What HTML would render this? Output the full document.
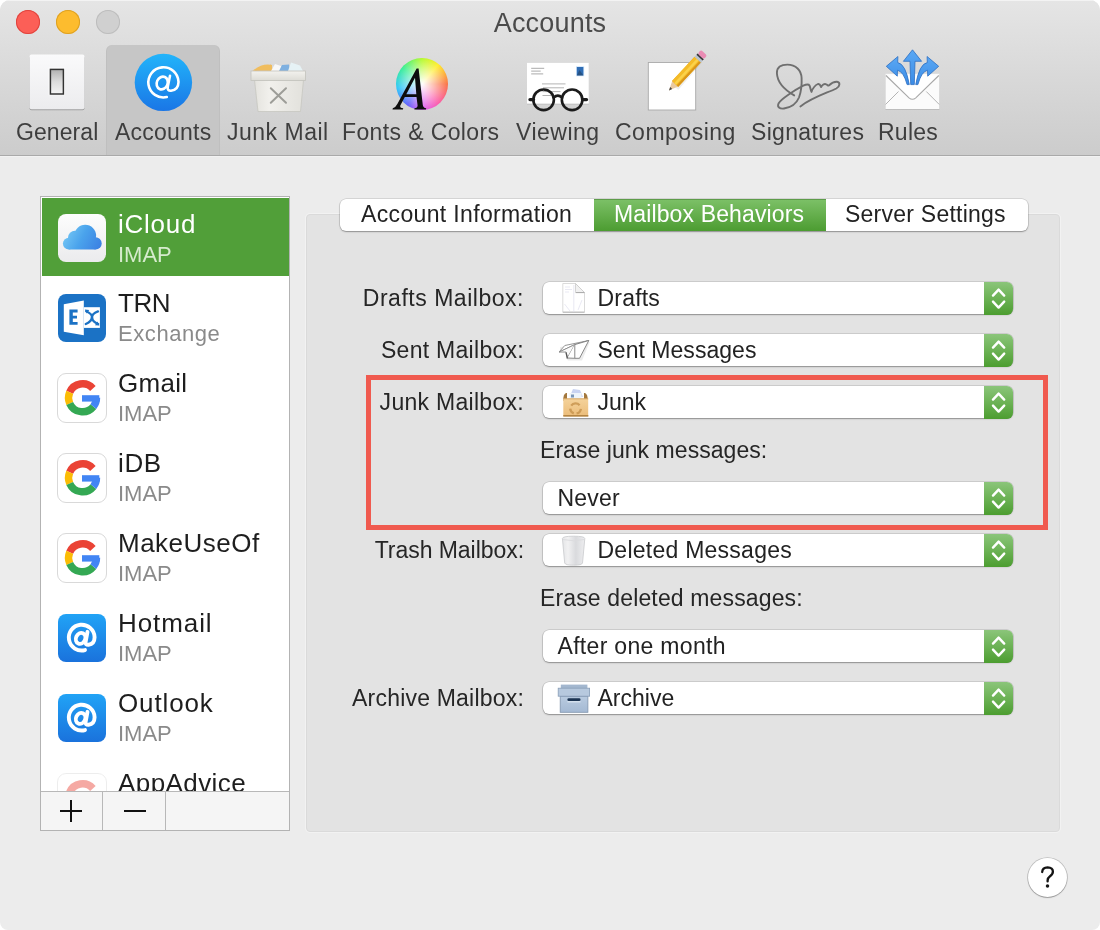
<!DOCTYPE html>
<html><head><meta charset="utf-8">
<style>
*{box-sizing:border-box;margin:0;padding:0}
html,body{width:1100px;height:930px;overflow:hidden;background:#fff;font-family:"Liberation Sans",sans-serif}
svg{overflow:visible}
#win{position:absolute;left:0;top:0;width:1100px;height:930px;background:#ececec;border-radius:10px 10px 8px 8px;overflow:hidden;will-change:transform}
.abs{position:absolute}
#tb{position:absolute;left:0;top:0;width:1100px;height:156px;background:linear-gradient(#e5e5e5,#cccccc);border-bottom:1px solid #a9a9a9;box-shadow:inset 0 1px 0 rgba(255,255,255,.55)}
.light{position:absolute;top:9.8px;width:24.2px;height:24.2px;border-radius:50%}
#title{position:absolute;left:0;width:1100px;top:10px;text-align:center;font-size:27px;line-height:27px;color:#4b4b4b;letter-spacing:.18px}
.tl{position:absolute;top:121px;font-size:23px;line-height:23px;color:#3e3e3e;white-space:nowrap}
#sel{position:absolute;left:106px;top:44.5px;width:114px;height:110.5px;background:#c6c6c6;border-radius:6px 6px 0 0;box-shadow:inset 1px 0 0 rgba(0,0,0,.03),inset -1px 0 0 rgba(0,0,0,.03)}
#side{position:absolute;left:40px;top:196px;width:250px;height:635px;background:#fff;border:1px solid #b3b3b3;overflow:hidden}
.row{position:absolute;left:0;width:248px;height:80px}
.rt{position:absolute;left:77px;top:12.6px;font-size:26px;line-height:26px;color:#1e1e1e;white-space:nowrap}
.rs{position:absolute;left:77px;top:45.8px;font-size:22px;line-height:22px;color:#8a8a8a;white-space:nowrap}
.ic{position:absolute;left:17px;top:17px;width:48px;height:48px}
.gi{left:16px;top:16px;width:50px;height:50px}
#bbar{position:absolute;left:0;top:594px;width:248px;height:39px;background:#f5f5f5;border-top:1px solid #b8b8b8}
#group{position:absolute;left:306px;top:214px;width:754px;height:618px;background:#e3e3e3;border:1px solid #dadada;border-radius:4px;box-shadow:0 0 0 1px rgba(255,255,255,.35)}
#seg{position:absolute;left:340px;top:198.5px;width:688px;height:32px;background:#fff;border-radius:6px;box-shadow:0 0 0 0.5px rgba(0,0,0,.18),0 1px 1.5px rgba(0,0,0,.3);overflow:hidden}
.seg{position:absolute;top:4px;font-size:23px;line-height:23px;color:#222;white-space:nowrap}
.lab{position:absolute;font-size:23px;line-height:23px;color:#262626;white-space:nowrap;text-align:right}
.pop{position:absolute;left:542.5px;width:470.3px;height:32.5px;background:#fff;border-radius:6px;box-shadow:0 0 0 0.5px rgba(0,0,0,.2),0 1px 1.5px rgba(0,0,0,.3)}
.pop .pt{position:absolute;left:55px;top:5px;font-size:23px;line-height:23px;color:#222;white-space:nowrap}
.pop .st{position:absolute;right:0;top:0;width:29px;height:32.5px}
.pop .pi{position:absolute;left:18px;top:0;width:30px;height:33px}
#red{position:absolute;left:366px;top:375px;width:682px;height:155px;border:5px solid #f05a4f}
#help{position:absolute;left:1027.5px;top:857.5px;width:39px;height:39px;border-radius:50%;background:#fff;box-shadow:0 0 0 0.8px rgba(0,0,0,.2),0 1px 1.2px rgba(0,0,0,.22)}
</style></head><body>
<div id="win">
  <div id="tb"></div><div class="abs" style="left:0;top:156px;width:1100px;height:1px;background:#f2f2f2"></div>
  <div class="light" style="left:16px;background:#fc5f57;box-shadow:inset 0 0 0 1px #e0443e"></div>
  <div class="light" style="left:56px;background:#fdbc2e;box-shadow:inset 0 0 0 1px #dea123"></div>
  <div class="light" style="left:96px;background:#d0d0d0;box-shadow:inset 0 0 0 1px #bdbdbd"></div>
  <div id="title">Accounts</div>
  <div id="sel"></div>
  <div class="tl" style="left:16px;letter-spacing:.07px">General</div>
  <div class="tl" style="left:115px;letter-spacing:.23px">Accounts</div>
  <div class="tl" style="left:227px;letter-spacing:.5px">Junk Mail</div>
  <div class="tl" style="left:342px;letter-spacing:.38px">Fonts &amp; Colors</div>
  <div class="tl" style="left:516px;letter-spacing:.5px">Viewing</div>
  <div class="tl" style="left:615px;letter-spacing:.5px">Composing</div>
  <div class="tl" style="left:751px;letter-spacing:.33px">Signatures</div>
  <div class="tl" style="left:878px;letter-spacing:.25px">Rules</div>
  <svg width="0" height="0" style="position:absolute">
    <defs>
      <g id="gicon">
        <rect x="-0.5" y="-0.5" width="49" height="49" rx="8.5" fill="#fff" stroke="#d9d9d9" stroke-width="1"/>
        <g fill="none" stroke-width="7.4" transform="translate(24.5 23.8)">
          <path d="M10.4 -9.4 A14 14 0 0 0 -12.8 -5.6" stroke="#ea4335"/>
          <path d="M-12.8 -5.6 A14 14 0 0 0 -12.8 5.6" stroke="#fbbc05"/>
          <path d="M-12.8 5.6 A14 14 0 0 0 10.9 8.8" stroke="#34a853"/>
          <path d="M10.9 8.8 A14 14 0 0 0 14 0" stroke="#4285f4"/>
        </g>
        <rect x="24" y="21.2" width="17.3" height="6.4" fill="#4285f4"/>
      </g>
      <linearGradient id="gat" x1="0" y1="0" x2="0" y2="1"><stop offset="0" stop-color="#21a3f6"/><stop offset="1" stop-color="#1a72dc"/></linearGradient>
      <g id="aticon">
        <rect x="0" y="0" width="48" height="48" rx="8" fill="url(#gat)"/>
        <g transform="translate(23.7 23.6)" fill="none" stroke="#fff" stroke-width="3.9" stroke-linecap="round">
          <ellipse cx="-1.1" cy="0.8" rx="4.6" ry="5.6" transform="rotate(24 -1.1 0.8)"/>
          <path d="M5.8 -5.8 L3.9 4.2 Q3.4 7.4 6.8 7.2 Q12.8 6.4 12.9 -0.4 A12.9 12.9 0 1 0 3.3 12.5"/>
        </g>
      </g>
      <linearGradient id="gstep" x1="0" y1="0" x2="0" y2="1"><stop offset="0" stop-color="#8bc57a"/><stop offset="0.5" stop-color="#6cb255"/><stop offset="1" stop-color="#4c9d30"/></linearGradient>
      <g id="stepper">
        <path d="M0 0 H23 A6 6 0 0 1 29 6 V27 A6 6 0 0 1 23 33 H0 Z" fill="url(#gstep)"/>
        <path d="M9 13.6 L14.6 7.6 L20.2 13.6 M9 19.6 L14.6 25.6 L20.2 19.6" fill="none" stroke="#fff" stroke-width="2.4" stroke-linecap="round" stroke-linejoin="round"/>
      </g>
    </defs>
  </svg>
  <!-- General icon -->
  <svg class="abs" style="left:24px;top:50px" width="66" height="66" viewBox="24 50 66 66">
    <defs>
      <linearGradient id="gplate" x1="0" y1="0" x2="0" y2="1"><stop offset="0" stop-color="#fafafb"/><stop offset="1" stop-color="#ececee"/></linearGradient>
      <linearGradient id="gsw" x1="0" y1="0" x2="0" y2="1"><stop offset="0" stop-color="#b0b0b0"/><stop offset="0.5" stop-color="#dcdcdc"/><stop offset="1" stop-color="#f4f4f4"/></linearGradient>
    </defs>
    <rect x="29.5" y="55.8" width="55" height="54.5" rx="2" fill="#8a8a8a" opacity=".7"/>
    <rect x="29.5" y="54.5" width="55" height="54.8" rx="2" fill="url(#gplate)"/>
    <rect x="48.6" y="67.6" width="16.4" height="27.6" fill="#fff"/>
    <rect x="50.4" y="69.4" width="13" height="24.6" fill="url(#gsw)" stroke="#333" stroke-width="1.5"/>
  </svg>
  <!-- Accounts icon -->
  <svg class="abs" style="left:130px;top:50px" width="68" height="66" viewBox="130 50 68 66">
    <defs><linearGradient id="gacc" x1="0" y1="0" x2="0" y2="1"><stop offset="0" stop-color="#22b4fa"/><stop offset="1" stop-color="#1a76e6"/></linearGradient></defs>
    <circle cx="163.4" cy="82.4" r="28.7" fill="url(#gacc)"/>
    <g transform="translate(163.4 82.4)" fill="none" stroke="#fff" stroke-width="2.6" stroke-linecap="round">
      <ellipse cx="-1.2" cy="0.6" rx="5.4" ry="6.5" transform="rotate(24 -1.2 0.6)"/>
      <path d="M6.6 -6.6 L4.3 4.6 Q3.7 8.5 7.6 8.3 Q15 7.4 15.1 -0.5 A15.1 15.1 0 1 0 3.4 14.7"/>
    </g>
  </svg>
  <!-- Junk Mail icon -->
  <svg class="abs" style="left:246px;top:56px" width="64" height="60" viewBox="246 56 64 60">
    <defs>
      <linearGradient id="gbin" x1="0" y1="0" x2="1" y2="0"><stop offset="0" stop-color="#e4e3de"/><stop offset=".3" stop-color="#f1f0ec"/><stop offset="1" stop-color="#e2e1dc"/></linearGradient>
      <linearGradient id="grim" x1="0" y1="0" x2="0" y2="1"><stop offset="0" stop-color="#f3f2ee"/><stop offset="1" stop-color="#dddcd6"/></linearGradient>
    </defs>
    <path d="M252 71 L271 64.5 L273 70 Z" fill="#e8b55a"/>
    <path d="M253 70.5 Q262 63 272 65 L272 71 Z" fill="#f0bd5e"/>
    <path d="M271 71 L275 64 L281 66 L281 71 Z" fill="#f8f8f8"/>
    <path d="M279 71 L282 65 L289 64.5 L290 71 Z" fill="#7fb0e0"/>
    <path d="M288 71 L291 62.5 L300 65.5 L303 71 Z" fill="#e6f2f5"/>
    <path d="M254.5 80 L303.5 80 L300.5 111.5 L258 111.5 Z" fill="url(#gbin)" stroke="#c7c6c0" stroke-width="0.8"/>
    <rect x="251" y="71" width="54.5" height="9.5" fill="url(#grim)" stroke="#c3c2bc" stroke-width="0.8"/>
    <path d="M270.8 88.3 L286 102.8 M286 88.3 L270.8 102.8" stroke="#9d9d98" stroke-width="2" stroke-linecap="round"/>
  </svg>
  <!-- Fonts & Colors icon -->
  <div class="abs" style="left:396px;top:57.5px;width:52px;height:52px;border-radius:50%;background:radial-gradient(circle at 50% 50%,rgba(255,255,255,1) 0%,rgba(255,255,255,.55) 35%,rgba(255,255,255,0) 75%),conic-gradient(from 0deg,hsl(80,95%,55%),hsl(55,100%,55%) 40deg,hsl(15,95%,60%) 90deg,hsl(330,95%,65%) 140deg,hsl(290,90%,65%) 180deg,hsl(240,95%,66%) 215deg,hsl(195,95%,55%) 260deg,hsl(150,85%,55%) 310deg,hsl(80,95%,55%) 360deg)"></div>
  <svg class="abs" style="left:388px;top:64px" width="44" height="50" viewBox="388 64 44 50">
    <path d="M392.5 109.5 L403 109.5 L403.2 108.3 Q399.5 108 400.3 105.4 L404.8 97 L416.5 97 L417.6 105.5 Q417.6 108 414.5 108.3 L414.4 109.5 L426 109.5 L426.2 108.3 Q423.2 108 422.8 105 L418.6 68.5 L416.6 68.5 L397.5 103.8 Q395.6 107.6 392.8 108.3 Z M406.3 94.2 L415 77.8 L416.3 94.2 Z" fill="#0d0d0d"/>
  </svg>
  <!-- Viewing icon -->
  <svg class="abs" style="left:522px;top:56px" width="72" height="60" viewBox="522 56 72 60">
    <rect x="527" y="63.5" width="61.8" height="41" fill="#9c9c9c" opacity=".45"/>
    <rect x="527" y="62.9" width="61.8" height="40.8" fill="#fff"/>
    <rect x="576" y="66.1" width="8.2" height="10.2" fill="#d7e9fb"/>
    <rect x="576.8" y="67" width="6.6" height="8.4" fill="#2f6db5"/>
    <path d="M576.8 75.4 L579.5 70 L583.4 75.4 Z" fill="#22476f" opacity=".7"/>
    <path d="M531.2 68.3 h13 M531.2 71.1 h9.5 M531.2 73.9 h12" stroke="#8e8e8e" stroke-width="0.75"/>
    <path d="M542 83.9 h23.5 M543 87.8 h21 M542.5 91.6 h18 M542.5 95.5 h9" stroke="#9a9a9a" stroke-width="0.75"/>
    <g fill="none" stroke="#1b1b1b" stroke-width="2.6">
      <circle cx="543.6" cy="99.8" r="10.3"/>
      <circle cx="572.1" cy="99.8" r="10.3"/>
      <path d="M553.6 97.6 Q557.9 93.5 562.1 97.6"/>
    </g>
    <path d="M530 99.6 L533.5 99.6 M582.5 99.6 L586.5 99.6" stroke="#1b1b1b" stroke-width="3.4" stroke-linecap="round"/>
  </svg>
  <!-- Composing icon -->
  <svg class="abs" style="left:642px;top:46px" width="70" height="70" viewBox="642 46 70 70">
    <defs><linearGradient id="gpen" x1="0" y1="0" x2="1" y2="0"><stop offset="0" stop-color="#e29a12"/><stop offset=".5" stop-color="#f7c32c"/><stop offset="1" stop-color="#d08a10"/></linearGradient></defs>
    <rect x="648.3" y="62.5" width="47.4" height="47.5" fill="#fff" stroke="#a9a9a9" stroke-width="0.9"/>
    <path d="M676 88 L700 60" stroke="#000" stroke-opacity=".07" stroke-width="6"/>
    <g transform="translate(669 90.4) rotate(-47)">
      <path d="M0 0 L9 -4 L9 4 Z" fill="#e9c9a0"/>
      <path d="M0 0 L3.2 -1.4 L3.2 1.4 Z" fill="#444"/>
      <rect x="9" y="-4.2" width="33" height="8.4" fill="url(#gpen)" transform="rotate(90 25.5 0) rotate(-90 25.5 0)"/>
      <rect x="9" y="-4.2" width="33" height="8.4" fill="#f4bb28"/>
      <rect x="9" y="-1.2" width="33" height="2.4" fill="#fbd24a"/>
      <rect x="9" y="2.2" width="33" height="2" fill="#d9951a"/>
      <rect x="42" y="-4.2" width="4.5" height="8.4" fill="#b9c3cc"/>
      <rect x="44.8" y="-4.2" width="1.7" height="8.4" fill="#333"/>
      <rect x="46.5" y="-4.2" width="5" height="8.4" rx="2" fill="#e98cb4"/>
    </g>
  </svg>
  <!-- Signatures icon -->
  <svg class="abs" style="left:770px;top:56px" width="76" height="60" viewBox="770 56 76 60">
    <path d="M794.2 95.4 C790 93 777.5 85 776.9 73.3 C776.8 67 781 64.6 787.3 64.6 C796 64.6 801.3 70.5 801.6 78 C802 86 801 92 799 97.5 C796.5 103.5 791.5 107.5 784 108.5 C779.5 109 777 107 778.5 103.5 C781 99 795 90 803.2 85.7 C806 84.4 808.5 83.8 809.5 85.5 C810.5 87.5 810.7 91 811.5 91.9 C812.5 89 814.5 85.5 818 84 C820.5 83.5 820.5 86.5 821.1 87.1 C822.5 84.5 824.5 83.4 826.5 84.5 C828 85.5 828 86 828.8 85.5 C831 83.5 834 81.6 837 81.8 C840.5 82.2 840 86.5 836.3 88.5 C827 93 812 97.5 800.4 106.4" fill="none" stroke="#6f6f6f" stroke-width="1.9" stroke-linecap="round" stroke-linejoin="round"/>
  </svg>
  <!-- Rules icon -->
  <svg class="abs" style="left:878px;top:46px" width="70" height="70" viewBox="878 46 70 70">
    <defs><linearGradient id="garr" x1="0" y1="0" x2="0" y2="1"><stop offset="0" stop-color="#5aa8f4"/><stop offset="1" stop-color="#3b8ce6"/></linearGradient></defs>
    <rect x="885.5" y="74.5" width="53.8" height="35.5" fill="#9a9a9a" opacity=".5"/>
    <rect x="885.5" y="73.8" width="53.8" height="35.3" fill="#fbfbfb"/>
    <path d="M885.5 104.5 L898.5 91.5 M939.3 104.5 L926.3 91.5" stroke="#b4b4b4" stroke-width="1"/>
    <path d="M886 75.5 L909 97.8 Q912.4 100.8 915.8 97.8 L938.8 75.5" fill="#fff" stroke="#a8a8a8" stroke-width="1.1"/>
    <g fill="url(#garr)" stroke="#2d6fc2" stroke-width="0.8" stroke-linejoin="round">
      <path d="M912.5 49.8 L921.6 61.3 L915 61.3 L914.3 84.6 L910.7 84.6 L910 61.3 L903.4 61.3 Z"/>
      <path d="M886.3 66.3 L897.9 56.5 L897.7 62.6 Q905.6 63.8 909.3 84.6 L907.1 84.6 Q903.6 71.6 897.5 70.2 L897.3 76.2 Z"/>
      <path d="M938.7 66.3 L927.1 56.5 L927.3 62.6 Q919.4 63.8 915.7 84.6 L917.9 84.6 Q921.4 71.6 927.5 70.2 L927.7 76.2 Z"/>
    </g>
  </svg>
  <div id="side">
    <div class="row" style="top:1px;left:1px;width:247px;height:78px;background:#519f39">
      <svg class="ic" style="top:16px;left:16px" width="48" height="48" viewBox="0 0 48 48">
        <defs>
          <linearGradient id="gicw" x1="0" y1="0" x2="0" y2="1"><stop offset="0" stop-color="#fdfdfd"/><stop offset="1" stop-color="#ebebed"/></linearGradient>
          <linearGradient id="gcloud" gradientUnits="userSpaceOnUse" x1="5" y1="14" x2="43" y2="34"><stop offset="0" stop-color="#7ccdf6"/><stop offset=".5" stop-color="#4aa3ec"/><stop offset="1" stop-color="#3b7fe2"/></linearGradient>
        </defs>
        <rect x="0" y="0" width="48" height="48" rx="8" fill="url(#gicw)"/>
        <g fill="url(#gcloud)">
          <circle cx="10.8" cy="29.6" r="5.9"/>
          <circle cx="17" cy="23.8" r="7"/>
          <circle cx="27.2" cy="21.6" r="10.9"/>
          <circle cx="37.6" cy="29.4" r="6.1"/>
          <rect x="10.8" y="24" width="26.8" height="11.5"/>
        </g>
      </svg>
      <div class="rt" style="color:#fff;left:76px;letter-spacing:.76px">iCloud</div>
      <div class="rs" style="color:#d6ebcd;left:76px">IMAP</div>
    </div>
    <div class="row" style="top:80px">
      <svg class="ic" width="48" height="48" viewBox="0 0 48 48">
        <rect x="0" y="0" width="48" height="48" rx="8" fill="#1b72c5"/>
        <path d="M5.8 10.3 L25.8 6.5 L25.8 41.3 L5.8 37.7 Z" fill="#fff"/>
        <rect x="25.8" y="13.2" width="16.1" height="20.7" fill="#fff"/>
        <path d="M11.4 15.6 H19.6 V18.5 H14.8 V21.7 H19 V24.6 H14.8 V27.9 H19.6 V30.8 H11.4 Z" fill="#1b72c5"/>
        <g stroke="#1b72c5" stroke-width="2.3" fill="none" stroke-linecap="round">
          <path d="M28.2 17.2 Q34.5 20 34.2 23.6 Q34 27.5 40.2 30"/>
          <path d="M40 17.4 Q33.8 19.8 33.8 23.6 Q33.8 27.4 27.8 30"/>
        </g>
        <path d="M26.8 15.5 L31.2 16 L28.8 19.6 Z M41.4 31.6 L37 31.2 L39.4 27.6 Z" fill="#1b72c5"/>
      </svg>
      <div class="rt" style="letter-spacing:-0.5px">TRN</div>
      <div class="rs" style="letter-spacing:.57px">Exchange</div>
    </div>
    <div class="row" style="top:160px">
      <svg class="ic gi" width="50" height="50" viewBox="-1 -1 50 50"><use href="#gicon"/></svg>
      <div class="rt" style="letter-spacing:0.28px">Gmail</div>
      <div class="rs">IMAP</div>
    </div>
    <div class="row" style="top:240px">
      <svg class="ic gi" width="50" height="50" viewBox="-1 -1 50 50"><use href="#gicon"/></svg>
      <div class="rt" style="letter-spacing:0.6px">iDB</div>
      <div class="rs">IMAP</div>
    </div>
    <div class="row" style="top:320px">
      <svg class="ic gi" width="50" height="50" viewBox="-1 -1 50 50"><use href="#gicon"/></svg>
      <div class="rt" style="letter-spacing:0.5px">MakeUseOf</div>
      <div class="rs">IMAP</div>
    </div>
    <div class="row" style="top:400px">
      <svg class="ic" width="48" height="48" viewBox="0 0 48 48"><use href="#aticon"/></svg>
      <div class="rt" style="letter-spacing:0.92px">Hotmail</div>
      <div class="rs">IMAP</div>
    </div>
    <div class="row" style="top:480px">
      <svg class="ic" width="48" height="48" viewBox="0 0 48 48"><use href="#aticon"/></svg>
      <div class="rt" style="letter-spacing:0.87px">Outlook</div>
      <div class="rs">IMAP</div>
    </div>
    <div class="row" style="top:560px">
      <svg class="ic gi" width="50" height="50" viewBox="-1 -1 50 50" style="opacity:.45"><use href="#gicon"/></svg>
      <div class="rt" style="letter-spacing:0.42px">AppAdvice</div>
    </div>
    <div id="bbar">
      <div class="abs" style="left:61px;top:0;width:1px;height:38px;background:#b8b8b8"></div>
      <div class="abs" style="left:124px;top:0;width:1px;height:38px;background:#b8b8b8"></div>
      <div class="abs" style="left:19px;top:18px;width:22px;height:2px;background:#111"></div>
      <div class="abs" style="left:29px;top:8px;width:2px;height:22px;background:#111"></div>
      <div class="abs" style="left:83px;top:18px;width:22px;height:2px;background:#111"></div>
    </div>
  </div>
  <div id="group"></div>
  <div id="seg">
    <div class="abs" style="left:254px;top:0;width:232px;height:32px;background:linear-gradient(#7dc168,#4c9c31);box-shadow:inset 0 1px 0 rgba(40,90,20,.35)"></div>
    <div class="seg" style="left:21px;letter-spacing:.35px">Account Information</div>
    <div class="seg" style="left:274px;color:#fff;letter-spacing:.13px">Mailbox Behaviors</div>
    <div class="seg" style="left:505px;letter-spacing:.24px">Server Settings</div>
  </div>

  <div class="lab" style="right:576px;top:286.5px;letter-spacing:.52px">Drafts Mailbox:</div>
  <div class="lab" style="right:576px;top:338.5px;letter-spacing:.28px">Sent Mailbox:</div>
  <div class="lab" style="right:576px;top:390.5px;letter-spacing:.29px">Junk Mailbox:</div>
  <div class="lab" style="left:540px;top:438.5px;text-align:left;letter-spacing:.05px">Erase junk messages:</div>
  <div class="lab" style="right:576px;top:538.5px;letter-spacing:-.05px">Trash Mailbox:</div>
  <div class="lab" style="left:540px;top:586.5px;text-align:left;letter-spacing:.14px">Erase deleted messages:</div>
  <div class="lab" style="right:576px;top:686.5px;letter-spacing:.2px">Archive Mailbox:</div>

  <div class="pop" style="top:281.5px">
    <svg class="pi" width="30" height="33" viewBox="0 0 30 33">
      <path d="M1.8 1.5 H14.5 L23.5 10.5 V30.2 H1.8 Z" fill="#fff" stroke="#d2d2d2" stroke-width="0.8"/>
      <path d="M1.8 30.2 H23.5" stroke="#b5b5b5" stroke-width="1"/>
      <path d="M14.5 1.5 L23.5 10.5 H15.5 Q14.5 10.5 14.5 9.5 Z" fill="#f1f1f1" stroke="#c4c4c4" stroke-width="0.7"/>
      <path d="M14.6 10.6 H23.4" stroke="#a9a9a9" stroke-width="1"/>
      <path d="M4 5 h5 M4 7.5 h7 M4 10 h4 M12.8 3 V30 M3.5 22 L9 29 M21 18 L17 28" stroke="#e0e0ee" stroke-width="0.7"/>
    </svg>
    <div class="pt" style="letter-spacing:.2px">Drafts</div><svg class="st" width="29" height="33"><use href="#stepper"/></svg></div>
  <div class="pop" style="top:333.5px">
    <svg class="pi" width="30" height="33" viewBox="0 0 30 33">
      <path d="M-1.9 11.5 L27.8 6.5 L20 25 L6 25 L4 22.5 L4 17 L-2 17 Z" fill="#000" opacity=".08" transform="translate(1 1.5)"/>
      <path d="M-1.9 18 L3.8 11.5 L27.8 6.5 L13.8 10.6 Z" fill="#fff" stroke="#8a8a8a" stroke-width="0.9" stroke-linejoin="round"/>
      <path d="M-1.9 18 L5 18 L6.5 23.5 L13.8 10.6 Z" fill="#fafafa" stroke="#8a8a8a" stroke-width="0.9" stroke-linejoin="round"/>
      <path d="M13.8 10.6 L13.8 24.3 L6.5 24 M13.8 10.6 L27.8 6.5 L18.5 24.3 L13.8 24.3" fill="#fff" stroke="#7a7a7a" stroke-width="0.9" stroke-linejoin="round"/>
      <path d="M5 18.5 L6.4 24.5" stroke="#555" stroke-width="1.2"/>
    </svg>
    <div class="pt" style="letter-spacing:.03px">Sent Messages</div><svg class="st" width="29" height="33"><use href="#stepper"/></svg></div>
  <div class="pop" style="top:385.5px">
    <svg class="pi" width="30" height="33" viewBox="0 0 30 33">
      <defs><linearGradient id="gjb" x1="0" y1="0" x2="0" y2="1"><stop offset="0" stop-color="#f4d29a"/><stop offset="1" stop-color="#ecbd7a"/></linearGradient></defs>
      <path d="M9 10 L12 3 L19 4 L22 11 Z" fill="#c9d3f2"/>
      <rect x="8.5" y="7" width="12" height="6" fill="#eef4fb"/>
      <rect x="10" y="8.5" width="3" height="3" fill="#7b96b8"/>
      <path d="M2.3 15 Q2 8 5 7 L6 7 L6 14 Z M26.7 15 Q27 8 24 7 L23 7 L23 14 Z" fill="#a3783e"/>
      <rect x="2.3" y="12.8" width="24.9" height="17.5" fill="url(#gjb)"/><path d="M2.3 12.8 H27.2" stroke="#d9a866" stroke-width="1"/>
      <rect x="2.3" y="29" width="25" height="1.6" fill="#b48543"/>
      <g fill="none" stroke="#c99650" stroke-width="2.3" opacity=".85"><path d="M10.2 19.6 A5.4 5.4 0 0 1 18.6 19.2"/><path d="M19.9 22.8 A5.4 5.4 0 0 1 15.6 27.4"/><path d="M12.8 27.3 A5.4 5.4 0 0 1 9.2 22.6"/></g>
    </svg>
    <div class="pt">Junk</div><svg class="st" width="29" height="33"><use href="#stepper"/></svg></div>
  <div class="pop" style="top:481.5px"><div class="pt" style="left:15px;letter-spacing:.2px">Never</div><svg class="st" width="29" height="33"><use href="#stepper"/></svg></div>
  <div class="pop" style="top:533.5px">
    <svg class="pi" width="30" height="33" viewBox="0 0 30 33">
      <defs><linearGradient id="gtr" x1="0" y1="0" x2="1" y2="0"><stop offset="0" stop-color="#e4e5e7"/><stop offset=".25" stop-color="#f1f1f2"/><stop offset=".6" stop-color="#d9dadd"/><stop offset="1" stop-color="#eeeef0"/></linearGradient></defs>
      <path d="M1.4 4.5 Q1.5 2.2 12.6 2.2 Q23.7 2.2 23.8 4.5 L21.5 29 Q21 31.2 12.6 31.2 Q4.2 31.2 3.7 29 Z" fill="url(#gtr)" stroke="#c9cacd" stroke-width="0.8"/>
      <path d="M2 5.5 Q12.6 8 23.2 5.5" fill="none" stroke="#dcdcdf" stroke-width="1"/>
    </svg>
    <div class="pt" style="letter-spacing:.25px">Deleted Messages</div><svg class="st" width="29" height="33"><use href="#stepper"/></svg></div>
  <div class="pop" style="top:629.5px"><div class="pt" style="left:15px;letter-spacing:.31px">After one month</div><svg class="st" width="29" height="33"><use href="#stepper"/></svg></div>
  <div class="pop" style="top:681.5px">
    <svg class="pi" style="width:32px" width="32" height="33" viewBox="0 0 32 33">
      <defs><linearGradient id="gar" x1="0" y1="0" x2="0" y2="1"><stop offset="0" stop-color="#b9cbe0"/><stop offset="1" stop-color="#a4b9d3"/></linearGradient></defs>
      <rect x="-0.8" y="14.2" width="27.7" height="16.1" fill="url(#gar)" stroke="#7f93ac" stroke-width="0.8"/>
      <rect x="-0.2" y="2.6" width="26.6" height="4" fill="#a3b7cf"/>
      <rect x="-2.8" y="6.2" width="31.4" height="8" fill="#b7c9de" stroke="#879db7" stroke-width="0.8"/>
      <rect x="6.4" y="16.3" width="13.1" height="2.7" rx="1.3" fill="#1d3553"/>
      <rect x="6.4" y="19.2" width="13.1" height="1.2" fill="#dbe6f2"/>
    </svg>
    <div class="pt">Archive</div><svg class="st" width="29" height="33"><use href="#stepper"/></svg></div>

  <div id="red"></div>
  <div id="help"></div>
  <svg class="abs" style="left:1030px;top:860px" width="36" height="36" viewBox="1030 860 36 36">
    <path d="M1042.2 872 Q1042.4 867.4 1047.6 867.3 Q1052.8 867.4 1052.9 871.6 Q1052.9 874.4 1050 876.2 Q1047.7 877.8 1047.6 880.6 V881.4" fill="none" stroke="#141414" stroke-width="2.3" stroke-linecap="round"/>
    <circle cx="1047.5" cy="886.1" r="1.75" fill="#141414"/>
  </svg>
</div>
</body></html>
